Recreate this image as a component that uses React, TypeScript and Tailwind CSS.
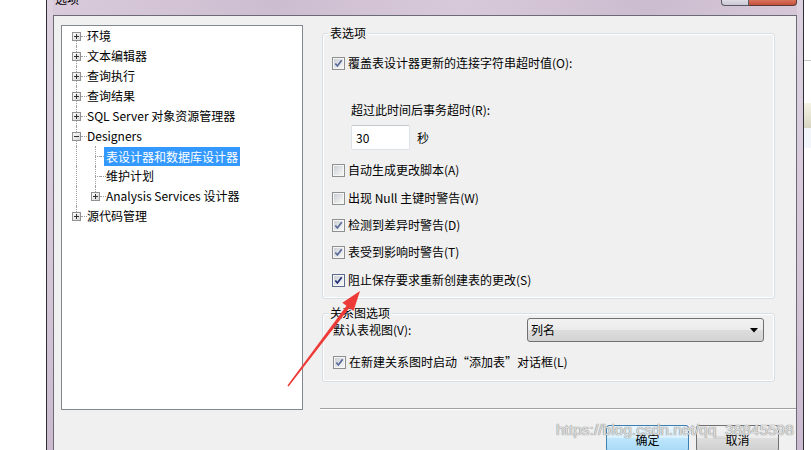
import { useId } from "react";

type TreeNode = {
  label: string;
  rails: boolean[];
  box?: "plus" | "minus";
  top: boolean;
  bottom: boolean;
  selected?: boolean;
};

const tree: TreeNode[] = [
  { label: "环境", rails: [], box: "plus", top: false, bottom: true },
  { label: "文本编辑器", rails: [], box: "plus", top: true, bottom: true },
  { label: "查询执行", rails: [], box: "plus", top: true, bottom: true },
  { label: "查询结果", rails: [], box: "plus", top: true, bottom: true },
  { label: "SQL Server 对象资源管理器", rails: [], box: "plus", top: true, bottom: true },
  { label: "Designers", rails: [], box: "minus", top: true, bottom: true },
  { label: "表设计器和数据库设计器", rails: [true], top: true, bottom: true, selected: true },
  { label: "维护计划", rails: [true], top: true, bottom: true },
  { label: "Analysis Services 设计器", rails: [true], box: "plus", top: true, bottom: false },
  { label: "源代码管理", rails: [], box: "plus", top: true, bottom: false },
];

const vdots = "w-px border-l border-dotted border-[#a0a0a0]";

function Expander({ open }: { open: boolean }) {
  const id = useId();
  return (
    <svg width="9" height="9" viewBox="0 0 9 9" className="block shrink-0">
      <defs>
        <linearGradient id={id} x1="0" y1="0" x2="1" y2="1">
          <stop offset="0" stopColor="#ffffff" />
          <stop offset="1" stopColor="#d4d4d4" />
        </linearGradient>
      </defs>
      <rect x="0.5" y="0.5" width="8" height="8" fill={`url(#${id})`} stroke="#919191" />
      <path d="M2 4.5h5" stroke="#333" />
      {!open && <path d="M4.5 2v5" stroke="#333" />}
    </svg>
  );
}

function CheckBox({ checked, focus }: { checked: boolean; focus?: boolean }) {
  const id = useId();
  return (
    <svg width="13" height="13" viewBox="0 0 13 13" className="block shrink-0">
      <defs>
        <linearGradient id={id} x1="0" y1="0" x2="1" y2="1">
          <stop offset="0" stopColor="#cbcfd5" />
          <stop offset="1" stopColor="#f7f7f7" />
        </linearGradient>
      </defs>
      <rect x="0.5" y="0.5" width="12" height="12" fill="#f6f6f6" stroke={focus ? "#5b6b8a" : "#8e8f8f"} />
      <rect x="2" y="2" width="9" height="9" fill={`url(#${id})`} />
      {checked && (
        <path
          d="M3.3 6.5 L5.4 9 L9.7 3.3"
          fill="none"
          stroke={focus ? "#1d2f78" : "#5a6a99"}
          strokeWidth="1.7"
        />
      )}
    </svg>
  );
}

function CheckRow({ label, checked, focus, className = "" }: { label: string; checked: boolean; focus?: boolean; className?: string }) {
  return (
    <div className={`flex h-[20px] items-center gap-[3px] ${className}`}>
      <CheckBox checked={checked} focus={focus} />
      <span>{label}</span>
    </div>
  );
}

function GroupBox({ title, className, children }: { title: string; className: string; children: React.ReactNode }) {
  return (
    <div className={`relative rounded-[3px] border border-[#d5dfe5] shadow-[inset_0_0_0_1px_#ffffff] ${className}`}>
      <span className="absolute -top-[9px] left-[5px] bg-[#f0f0f0] px-[2px] leading-[16px]">{title}</span>
      {children}
    </div>
  );
}

function TreeRow({ node }: { node: TreeNode }) {
  return (
    <div className="flex h-[20px] items-stretch pl-[10px]">
      {node.rails.map((r, i) => (
        <div key={i} className="flex w-[19px]">
          <div className={`ml-[4px] h-full ${r ? vdots : ""}`} />
        </div>
      ))}
      <div className="flex w-[9px] flex-col items-center">
        <div className={`flex-1 ${node.top ? vdots : "w-px"}`} />
        {node.box ? (
          <Expander open={node.box === "minus"} />
        ) : (
          <div className="flex h-px w-full">
            <div className="ml-[4px] w-[5px] border-t border-dotted border-[#a0a0a0]" />
          </div>
        )}
        <div className={`flex-1 ${node.bottom ? vdots : "w-px"}`} />
      </div>
      <div className="w-[6px] self-center border-t border-dotted border-[#a0a0a0]" />
      <div className="flex items-center">
        {node.selected ? (
          <span className="-ml-[2px] bg-[#3399ff] px-[2px] leading-[19px] text-white">{node.label}</span>
        ) : (
          <span>{node.label}</span>
        )}
      </div>
    </div>
  );
}

export default function App() {
  return (
    <div className="relative flex h-[450px] w-[811px] overflow-hidden bg-white font-['Noto_Sans_CJK_SC','Noto_Sans',sans-serif] text-[12px] text-black">
      <div className="w-[46px] shrink-0" />

      {/* window */}
      <div className="flex w-[758px] shrink-0 flex-col border-x border-[#2e2e36] bg-gradient-to-b from-[#ddd1e0] via-[#d6c8d9] to-[#cbbacf] px-[6px]">
        <div className="flex h-[15px] shrink-0 items-start justify-between bg-[linear-gradient(90deg,#d9cadb_0%,#cdbdd0_30%,#d8c9da_55%,#ccbccf_80%,#d6c7d8_100%)]">
          <span className="-mt-[9px] ml-[2px] leading-[16px]">选项</span>
          <div className="flex">
            <div className="h-[6px] w-[28px] rounded-bl-[4px] border border-t-0 border-[#5a5a66] bg-gradient-to-b from-[#dedde6] to-[#c9c8d4]" />
            <div className="h-[6px] w-[48px] rounded-br-[4px] border border-t-0 border-l-0 border-[#5a3a34] bg-gradient-to-b from-[#d9735d] to-[#c4503a]" />
          </div>
        </div>

        {/* client area */}
        <div className="flex flex-1 border border-b-0 border-[#6b6b75] bg-[#f0f0f0] pl-[7px] pt-[9px]">
          {/* tree */}
          <div className="h-[385px] w-[242px] shrink-0 border border-[#828790] bg-white">
            {tree.map((n) => (
              <TreeRow key={n.label} node={n} />
            ))}
          </div>

          {/* options */}
          <div className="ml-[19px] flex flex-1 flex-col pt-[8px]">
            <GroupBox title="表选项" className="h-[266px] w-[453px] pl-[9px] pt-[19px]">
              <CheckRow label="覆盖表设计器更新的连接字符串超时值(O):" checked />
              <div className="ml-[19px] mt-[27px] flex h-[20px] items-center">超过此时间后事务超时(R):</div>
              <div className="ml-[19px] mt-[5px] flex h-[25px] items-center">
                <div className="flex h-[25px] w-[59px] items-center rounded-[2px] border border-[#dce2e8] border-t-[#c4c8cf] bg-white pl-[4px]">
                  30
                </div>
                <span className="ml-[7px]">秒</span>
              </div>
              <CheckRow className="mt-[10px]" label="自动生成更改脚本(A)" checked={false} />
              <CheckRow className="mt-[8px]" label="出现 Null 主键时警告(W)" checked={false} />
              <CheckRow className="mt-[7px]" label="检测到差异时警告(D)" checked />
              <CheckRow className="mt-[7px]" label="表受到影响时警告(T)" checked />
              <CheckRow className="mt-[8px]" label="阻止保存要求重新创建表的更改(S)" checked focus />
            </GroupBox>

            <GroupBox title="关系图选项" className="mt-[14px] h-[69px] w-[453px] pl-[10px] pt-[4px]">
              <div className="flex h-[24px] items-center">
                <span className="w-[194px] shrink-0">默认表视图(V):</span>
                <div className="flex h-[24px] w-[237px] items-center justify-between rounded-[3px] border border-[#707070] bg-[linear-gradient(#f2f2f2_0%,#ebebeb_50%,#dddddd_50%,#d4d4d4_100%)] pl-[3px] pr-[5px]">
                  <span>列名</span>
                  <svg width="8" height="5" viewBox="0 0 8 5" className="block">
                    <path d="M0 0h8L4 4.5z" fill="#000" />
                  </svg>
                </div>
              </div>
              <CheckRow className="mt-[10px]" label="在新建关系图时启动“添加表”对话框(L)" checked />
            </GroupBox>

            <div className="-ml-[2px] mt-[26px] h-[2px] border-t border-[#a0a0a0] border-b border-b-white" />

            <div className="mt-[15px] flex justify-end gap-[7px] pr-[17px]">
              <div className="flex h-[27px] w-[83px] items-center justify-center rounded-[3px] border border-[#3c7fb1] bg-[linear-gradient(#eaf6fd_0%,#d9f0fc_50%,#bee6fd_50%,#a7d9f5_100%)] pt-[3px]">
                确定
              </div>
              <div className="flex h-[27px] w-[83px] items-center justify-center rounded-[3px] border border-[#707070] bg-[linear-gradient(#f2f2f2_0%,#ebebeb_50%,#dddddd_50%,#cfcfcf_100%)] pt-[3px]">
                取消
              </div>
            </div>
          </div>
        </div>
      </div>

      {/* window behind, on the right */}
      <div className="flex flex-1 flex-col bg-white">
        <div className="h-[60px]" />
        <div className="h-px bg-[#c8c8c8]" />
        <div className="h-[42px]" />
        <div className="h-[25px] bg-gradient-to-b from-[#f6f4e6] to-[#d8d6c2]" />
        <div className="h-[20px] bg-[#f3f6fb]" />
      </div>

      {/* watermark */}
      <div className="pointer-events-none absolute left-[556px] top-[421px] font-['Liberation_Sans',sans-serif] text-[15.5px] leading-[18px] text-[#dedede] [text-shadow:0_0_1px_#8a8a8a,0_0_1px_#8a8a8a]">
        https://blog.csdn.net/qq_38845598
      </div>

      {/* red annotation arrow */}
      <svg className="pointer-events-none absolute left-0 top-0" width="811" height="450" viewBox="0 0 811 450">
        <polygon
          points="288.6,386.5 349.3,308 353.5,311.1 360,291 342.3,302.7 346.5,305.8 287.4,385.5"
          fill="#ee3a36"
        />
      </svg>
    </div>
  );
}
